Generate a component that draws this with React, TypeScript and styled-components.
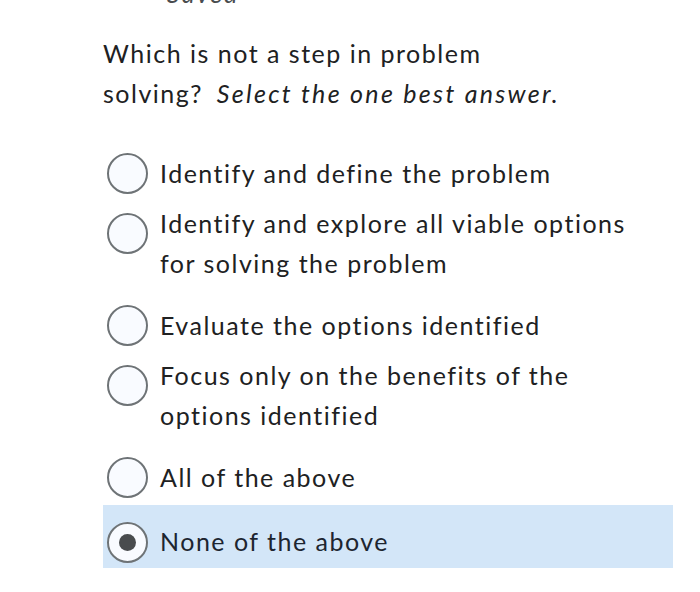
import React from 'react';
import styled, { createGlobalStyle } from 'styled-components';

const GlobalStyle = createGlobalStyle`
  body {
    margin: 0;
    background: #ffffff;
    font-family: Lato, 'Noto Sans', sans-serif;
    color: #202122;
    overflow: hidden;
    font-variant-ligatures: none;
  }
`;

const Page = styled.div`
  width: 700px;
  height: 592px;
  padding: 0 27px 0 103px;
  box-sizing: border-box;
  overflow: hidden;
`;

const SavedBar = styled.div`
  display: flex;
  align-items: center;
  gap: 36px;
  height: 30px;
  margin-top: -22px;
  padding-left: 10px;
  font-size: 25px;
  font-style: italic;
  line-height: 30px;
  letter-spacing: 2px;
  color: #494c4e;

  > svg {
    flex: none;
    margin-top: -6px;
  }
`;

const Question = styled.p`
  width: 475px;
  margin: 25px 0 0;
  font-size: 25px;
  line-height: 40px;
  letter-spacing: 1.5px;

  > em {
    margin-left: 6px;
    letter-spacing: 2.3px;
  }
`;

const OptionList = styled.div`
  display: flex;
  flex-direction: column;
  margin-top: 30px;
`;

const Option = styled.label<{ $wrap?: boolean; $checked?: boolean }>`
  display: flex;
  align-items: flex-start;
  gap: 12px;
  padding: ${(p) => (p.$wrap ? '0 40px 12px 4px' : p.$checked ? '16px 40px 6px 4px' : '10px 40px 10px 4px')};
  margin-top: ${(p) => (p.$checked ? '-2px' : '0')};
  background: ${(p) => (p.$checked ? '#d3e6f8' : 'transparent')};
  font-size: 25px;
  line-height: 40px;
  letter-spacing: 1.5px;
  color: ${(p) => (p.$checked ? '#1d2530' : '#202122')};
`;

const Radio = styled.span<{ $wrap?: boolean; $checked?: boolean }>`
  flex: none;
  display: flex;
  align-items: center;
  justify-content: center;
  width: 41px;
  height: 41px;
  margin-top: ${(p) => (p.$wrap ? '10px' : p.$checked ? '1px' : '0')};
  margin-bottom: -1px;
  box-sizing: border-box;
  border: 2px solid #6e7376;
  border-radius: 50%;
  background: #f9fbff;

  &::after {
    content: '';
    display: ${(p) => (p.$checked ? 'block' : 'none')};
    width: 17px;
    height: 17px;
    border-radius: 50%;
    background: #494c4e;
  }
`;

const OptionText = styled.span`
  flex: 1;
`;

const options = [
  { text: 'Identify and define the problem' },
  { text: 'Identify and explore all viable options for solving the problem', wrap: true },
  { text: 'Evaluate the options identified' },
  { text: 'Focus only on the benefits of the options identified', wrap: true },
  { text: 'All of the above' },
  { text: 'None of the above', checked: true },
];

const App = () => {
  return (
    <>
      <GlobalStyle />
      <Page>
        <SavedBar>
          <svg width="18" height="18" viewBox="0 0 18 18">
            <path d="M9 0 L18 9 L9 18 L0 9 Z" fill="#a3a6a8" />
          </svg>
          <span>Saved</span>
        </SavedBar>
        <Question>
          Which is not a step in problem solving? <em>Select the one best answer.</em>
        </Question>
        <OptionList>
          {options.map((o) => (
            <Option key={o.text} $wrap={o.wrap} $checked={o.checked}>
              <Radio $wrap={o.wrap} $checked={o.checked} />
              <OptionText>{o.text}</OptionText>
            </Option>
          ))}
        </OptionList>
      </Page>
    </>
  );
};

export default App;
